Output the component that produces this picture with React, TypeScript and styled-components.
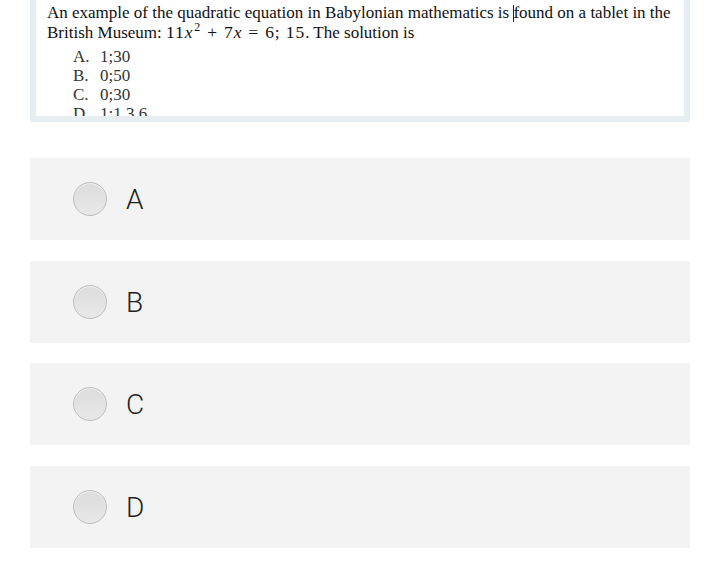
import React from "react";
import styled, { createGlobalStyle } from "styled-components";

const Global = createGlobalStyle`
  html, body { margin: 0; padding: 0; background: #ffffff; }
  body { width: 720px; height: 564px; overflow: hidden; }
`;

const Page = styled.div`
  padding: 0 30px;
  display: flex;
  flex-direction: column;
`;

const QuestionPanel = styled.div`
  border: 6px solid #e6eef1;
  border-top: none;
  background: #ffffff;
  overflow: hidden;
  padding: 0 6px 0 11px;
  box-sizing: border-box;
  height: 122px;
`;

const Stem = styled.p`
  margin: 0;
  padding-top: 4px;
  font-family: "Liberation Serif", "Times New Roman", serif;
  font-size: 17px;
  line-height: 17px;
  color: #111;
  white-space: nowrap;
`;

const Math = styled.span`
  font-family: "Liberation Serif", serif;
  font-size: 17.5px;
  letter-spacing: 0.9px;
`;

const MathI = styled.i`
  font-style: italic;
`;

const Op = styled.span`
  margin: 0 6px;
`;

const Sup = styled.span`
  display: inline-block;
  font-size: 12px;
  line-height: 10px;
  vertical-align: 7px;
  margin-left: 1px;
`;

const Cursor = styled.span`
  display: inline-block;
  width: 1px;
  height: 17px;
  background: #222;
  vertical-align: -4px;
  margin-right: -1px;
`;

const ChoiceList = styled.div`
  margin-top: 6px;
  padding-left: 26px;
  display: flex;
  flex-direction: column;
`;

const ChoiceLine = styled.div`
  display: flex;
  font-family: "Liberation Serif", "Times New Roman", serif;
  font-size: 17px;
  line-height: 19px;
  color: #333;
`;

const ChoiceMark = styled.span`
  width: 27px;
  flex: none;
`;

const Options = styled.div`
  margin-top: 36px;
  display: flex;
  flex-direction: column;
  gap: 20.5px;
`;

const OptionRow = styled.label`
  height: 82px;
  background: #f3f3f3;
  display: flex;
  align-items: center;
  padding-left: 43px;
  gap: 19px;
  cursor: pointer;
`;

const Radio = styled.span`
  width: 34px;
  height: 34px;
  box-sizing: border-box;
  border-radius: 50%;
  border: 1px solid #bdbdbd;
  background: linear-gradient(#dcdcdc, #e8e8e8);
  box-shadow: inset 0 1px 1px rgba(255, 255, 255, 0.6);
  flex: none;
`;

const OptionLetter = styled.span`
  font-family: Roboto, "Liberation Sans", Arial, sans-serif;
  font-size: 28px;
  font-weight: 300;
  color: #222;
  line-height: 1;
  padding-top: 2px;
`;

const choices = [
  ["A.", "1;30"],
  ["B.", "0;50"],
  ["C.", "0;30"],
  ["D.", "1;1 3 6"],
];

export default function App() {
  return (
    <>
      <Global />
      <Page>
        <QuestionPanel>
          <Stem>
            An example of the quadratic equation in Babylonian mathematics is <Cursor />found on a
            tablet in the
            <br />
            British Museum:{" "}
            <Math>
              11<MathI>x</MathI>
              <Sup>2</Sup>
              <Op>+</Op>7<MathI>x</MathI>
              <Op>=</Op>6;&nbsp;15
            </Math>
            . The solution is
          </Stem>
          <ChoiceList>
            {choices.map(([m, t]) => (
              <ChoiceLine key={m}>
                <ChoiceMark>{m}</ChoiceMark>
                <span>{t}</span>
              </ChoiceLine>
            ))}
          </ChoiceList>
        </QuestionPanel>
        <Options>
          {["A", "B", "C", "D"].map((l) => (
            <OptionRow key={l}>
              <Radio />
              <OptionLetter>{l}</OptionLetter>
            </OptionRow>
          ))}
        </Options>
      </Page>
    </>
  );
}
